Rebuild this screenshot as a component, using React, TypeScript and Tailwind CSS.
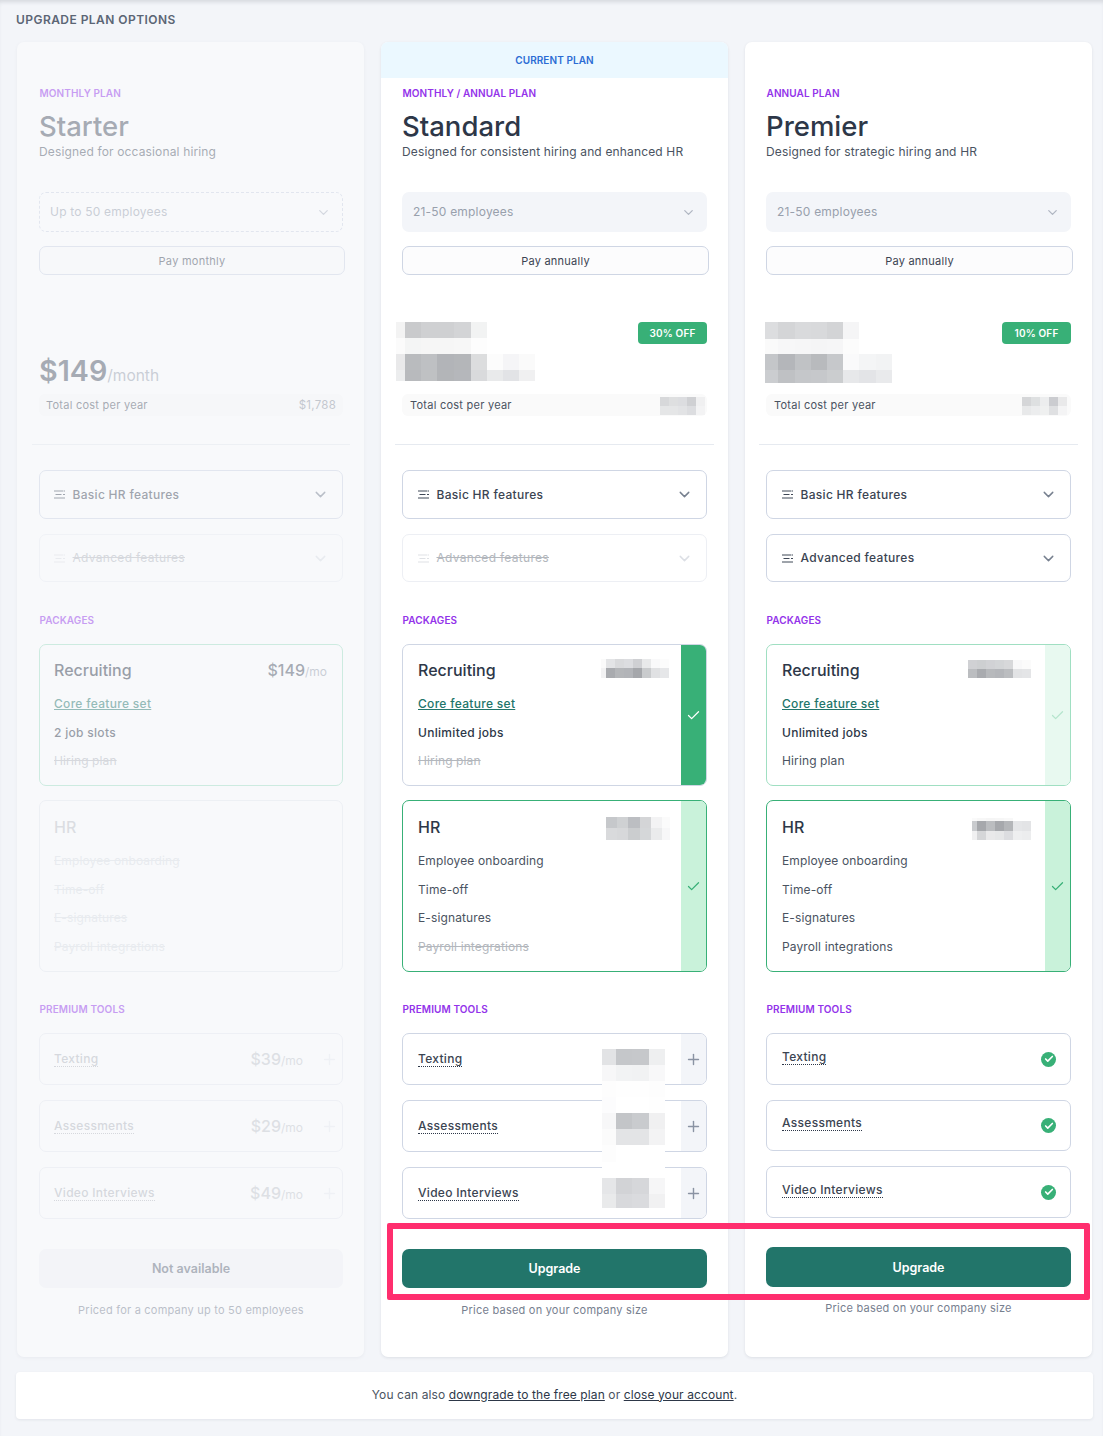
import { Check, ChevronDown, Plus } from "lucide-react";

type MosaicData = { xs: number[]; ys: number[]; rows: string[][] };

type PackageData = {
  title: string;
  box: string;
  strip?: string;
  check?: string;
  titleCls?: string;
  mosaic?: MosaicData;
  pr?: string;
  price?: string;
  items: { text: string; cls: string }[];
};

type ToolData = { name: string; price?: string; mosaic?: boolean };

type Plan = {
  kind: "starter" | "standard" | "premier";
  label: string;
  name: string;
  blurb: string;
  seats: string;
  billing: string;
  priceMosaic?: MosaicData;
  off?: string;
  totalMosaic?: MosaicData;
  advancedOff: boolean;
  packages: PackageData[];
};

const STD_PRICE: MosaicData = {
  xs: [9.3, 16, 16, 16.7, 16.7, 16, 16, 16.6, 16],
  ys: [16.3, 16, 16, 11],
  rows: [
    ["#f3f3f3", "#c9cacc", "#cfd0d2", "#cfd0d2", "#d3d4d6", "#f2f3f3", "#fff", "#fff", "#fff"],
    ["#fbfbfb", "#f4f5f5", "#f6f6f6", "#f6f6f6", "#f7f7f7", "#fdfdfd", "#fff", "#fff", "#fff"],
    ["#e9e9ea", "#b9bbbe", "#bec0c3", "#b2b4b8", "#b4b6b9", "#dcddde", "#fcfcfc", "#f5f5f7", "#fafafa"],
    ["#ecedee", "#b8babd", "#bfc1c3", "#b3b5b8", "#b5b7bb", "#d9dadc", "#e9eaeb", "#e2e3e6", "#f0f0f1"],
  ],
};

const PRE_PRICE: MosaicData = {
  xs: [13.3, 16.7, 16, 16.3, 16, 16, 16.4, 16.3],
  ys: [16.6, 15.7, 16, 13],
  rows: [
    ["#dcdddf", "#d4d5d7", "#d9dadc", "#d8d9db", "#d3d4d6", "#f5f5f6", "#fff", "#fff"],
    ["#fafafa", "#f7f7f8", "#f6f6f7", "#f5f5f6", "#f6f6f7", "#fcfcfc", "#fff", "#fff"],
    ["#c4c6c9", "#b4b6ba", "#c0c2c5", "#b8babd", "#c6c8cb", "#fafafb", "#f4f5f6", "#f2f3f4"],
    ["#cbcdd0", "#bfc1c4", "#c5c7ca", "#c6c8cb", "#cbcdcf", "#e7e8ea", "#e3e4e7", "#e9eaec"],
  ],
};

const STD_TOTAL: MosaicData = {
  xs: [9, 9.3, 8.7, 9, 9],
  ys: [9, 9],
  rows: [
    ["#d7d8da", "#dedfe0", "#dcdde0", "#cfd0d3", "#f0f0f1"],
    ["#e5e6e7", "#e5e6e7", "#e2e3e5", "#dcdde0", "#f3f3f4"],
  ],
};

const PRE_TOTAL: MosaicData = {
  xs: [9, 9, 9, 9.4, 9],
  ys: [9, 9],
  rows: [
    ["#d5d6d8", "#dee0e1", "#ecedee", "#cbccd0", "#e9e9ea"],
    ["#e8e9ea", "#ecedee", "#eff0f0", "#dfe0e2", "#f4f4f5"],
  ],
};

const STD_RECRUIT: MosaicData = {
  xs: [4.7, 9, 9, 9, 9, 9, 9.3, 8.7],
  ys: [9, 9.4],
  rows: [
    ["#fafafa", "#e3e4e6", "#d9dadc", "#dcdde0", "#cfd0d3", "#e8e9ea", "#f9f9fa", "#fcfcfc"],
    ["#f2f2f3", "#a9abaf", "#b4b6b9", "#b2b4b8", "#a5a7ab", "#c9cbcd", "#e0e1e3", "#e6e7e9"],
  ],
};

const STD_HR: MosaicData = {
  xs: [11.3, 11, 11.4, 11.3, 11, 8],
  ys: [11, 11.4],
  rows: [
    ["#c6c8cb", "#cfd1d3", "#bcbec2", "#d4d5d7", "#f3f3f4", "#fbfbfb"],
    ["#d9dadc", "#d7d8da", "#cbcdcf", "#d5d7d9", "#eaebec", "#f7f7f8"],
  ],
};

const PRE_RECRUIT: MosaicData = {
  xs: [9, 9, 9, 9, 9, 9, 9],
  ys: [9, 9],
  rows: [
    ["#d0d1d4", "#cdcfd1", "#d1d2d5", "#d3d5d7", "#d7d8da", "#f8f8f9", "#fbfbfb"],
    ["#bbbdc0", "#a9abaf", "#b7b9bc", "#b4b6ba", "#bbbdc0", "#e2e3e5", "#e4e5e7"],
  ],
};

const PRE_HR: MosaicData = {
  xs: [5, 9, 9, 9, 9, 9, 9],
  ys: [3.7, 9.3, 9],
  rows: [
    ["#fafafa", "#f7f7f7", "#f5f5f5", "#f6f6f6", "#f8f8f8", "#fff", "#fff"],
    ["#c9cbce", "#a6a8ac", "#bbbdc0", "#a6a8ac", "#b4b6b9", "#e5e6e8", "#e3e4e6"],
    ["#f0f0f1", "#d5d6d8", "#e9e9ea", "#e6e7e8", "#dcdde0", "#eeeff0", "#ecedee"],
  ],
};

const TOOL_OVERLAY: MosaicData = {
  xs: [14.3, 16, 16.7, 16],
  ys: [16, 16, 15.7, 16, 16.6, 16, 16.7, 16, 16, 14],
  rows: [
    ["#e2e3e5", "#c5c7ca", "#c6c8cb", "#eeeff0"],
    ["#f7f7f8", "#f2f3f4", "#f1f2f3", "#f8f8f9"],
    ["#fdfdfd", "#fefefe", "#fefefe", "#fdfdfd"],
    ["#fcfcfd", "#fff", "#fff", "#fefefe"],
    ["#f7f7f8", "#c3c5c8", "#c9cbce", "#f0f0f1"],
    ["#fbfbfb", "#e3e4e6", "#e3e4e6", "#f3f3f4"],
    ["#fdfdfd", "#fff", "#fff", "#fff"],
    ["#fff", "#fff", "#fff", "#fff"],
    ["#e5e6e8", "#d2d3d6", "#d6d7da", "#f6f6f7"],
    ["#e9eaeb", "#d8d9dc", "#dadbde", "#f1f1f2"],
  ],
};

const TOOLS: Record<Plan["kind"], ToolData[]> = {
  starter: [
    { name: "Texting", price: "$39" },
    { name: "Assessments", price: "$29" },
    { name: "Video Interviews", price: "$49" },
  ],
  standard: [{ name: "Texting" }, { name: "Assessments" }, { name: "Video Interviews" }],
  premier: [{ name: "Texting" }, { name: "Assessments" }, { name: "Video Interviews" }],
};

const ON = "text-[#4a5361] tracking-[0.12px]";
const OFF = "text-[#b3b7bd] line-through tracking-[0.12px]";
const GONE = "text-[#dcdfe4] line-through tracking-[0.12px]";
const CORE = "text-[#22756a] underline font-medium tracking-[0.3px]";
const STRONG = "text-[#2d3748] font-medium tracking-[0.3px]";

const plans: Plan[] = [
  {
    kind: "starter",
    label: "MONTHLY PLAN",
    name: "Starter",
    blurb: "Designed for occasional hiring",
    seats: "Up to 50 employees",
    billing: "Pay monthly",
    advancedOff: true,
    packages: [
      {
        title: "Recruiting",
        box: "border-[#a0dfc2]",
        price: "$149",
        items: [
          { text: "Core feature set", cls: CORE },
          { text: "2 job slots", cls: STRONG },
          { text: "Hiring plan", cls: OFF },
        ],
      },
      {
        title: "HR",
        box: "border-[#e7eaf0]",
        titleCls: "opacity-30",
        items: [
          { text: "Employee onboarding", cls: GONE },
          { text: "Time-off", cls: GONE },
          { text: "E-signatures", cls: GONE },
          { text: "Payroll integrations", cls: GONE },
        ],
      },
    ],
  },
  {
    kind: "standard",
    label: "MONTHLY / ANNUAL PLAN",
    name: "Standard",
    blurb: "Designed for consistent hiring and enhanced HR",
    seats: "21-50 employees",
    billing: "Pay annually",
    priceMosaic: STD_PRICE,
    off: "30% OFF",
    totalMosaic: STD_TOTAL,
    advancedOff: true,
    packages: [
      {
        title: "Recruiting",
        box: "border-[#cfd6e4]",
        strip: "bg-[#38b077]",
        check: "text-white",
        mosaic: STD_RECRUIT,
        pr: "pr-[12px]",
        items: [
          { text: "Core feature set", cls: CORE },
          { text: "Unlimited jobs", cls: STRONG },
          { text: "Hiring plan", cls: OFF },
        ],
      },
      {
        title: "HR",
        box: "border-[#38b077]",
        strip: "bg-[#c9f2da]",
        check: "text-[#38b077]",
        mosaic: STD_HR,
        pr: "pr-[11px]",
        items: [
          { text: "Employee onboarding", cls: ON },
          { text: "Time-off", cls: ON },
          { text: "E-signatures", cls: ON },
          { text: "Payroll integrations", cls: OFF },
        ],
      },
    ],
  },
  {
    kind: "premier",
    label: "ANNUAL PLAN",
    name: "Premier",
    blurb: "Designed for strategic hiring and HR",
    seats: "21-50 employees",
    billing: "Pay annually",
    priceMosaic: PRE_PRICE,
    off: "10% OFF",
    totalMosaic: PRE_TOTAL,
    advancedOff: false,
    packages: [
      {
        title: "Recruiting",
        box: "border-[#a0dfc2]",
        strip: "bg-[#e8f9f0]",
        check: "text-[#b5e5cd]",
        mosaic: PRE_RECRUIT,
        pr: "pr-[14px]",
        items: [
          { text: "Core feature set", cls: CORE },
          { text: "Unlimited jobs", cls: STRONG },
          { text: "Hiring plan", cls: ON },
        ],
      },
      {
        title: "HR",
        box: "border-[#38b077]",
        strip: "bg-[#c9f2da]",
        check: "text-[#38b077]",
        mosaic: PRE_HR,
        pr: "pr-[14px]",
        items: [
          { text: "Employee onboarding", cls: ON },
          { text: "Time-off", cls: ON },
          { text: "E-signatures", cls: ON },
          { text: "Payroll integrations", cls: ON },
        ],
      },
    ],
  },
];

// blurred-out prices in the screenshot
function Mosaic({ data, className }: { data: MosaicData; className?: string }) {
  return (
    <div
      className={`grid shrink-0 ${className ?? ""}`}
      style={{
        gridTemplateColumns: data.xs.map((x) => `${x}px`).join(" "),
        gridTemplateRows: data.ys.map((y) => `${y}px`).join(" "),
      }}
    >
      {data.rows.flat().map((c, i) => (
        <div key={i} style={{ background: c }} />
      ))}
    </div>
  );
}

function BarsIcon() {
  return (
    <svg width="11" height="9" viewBox="0 0 11 9" fill="none" stroke="currentColor" strokeWidth="1" className="shrink-0">
      <path d="M0 1h9.5M10 1h1M1.5 4.5H7.5M9 4.5h2M0 8h11" />
    </svg>
  );
}

function Section({ children, className }: { children: React.ReactNode; className?: string }) {
  return (
    <div className={`ml-[0.5px] text-[10px] leading-[12px] font-semibold tracking-[0.1px] text-[#9333ea] ${className ?? ""}`}>
      {children}
    </div>
  );
}

function Accordion({ label, off, inset, className }: { label: string; off?: boolean; inset: string; className: string }) {
  return (
    <div
      className={`flex items-center rounded-[7px] border pr-[13px] ${inset} ${off ? "border-[#edeff4]" : "border-[#cfd6e4]"} ${className}`}
    >
      <span className={off ? "text-[#dfe1e5]" : "text-[#3f4856]"}>
        <BarsIcon />
      </span>
      <span className={`ml-[7.5px] flex-1 text-[12px] tracking-[0.3px] ${off ? "text-[#b3b7bd] line-through" : "font-medium text-[#3b4452]"}`}>
        {label}
      </span>
      <ChevronDown size={17} strokeWidth={2} className={off ? "text-[#dcdfe5]" : "text-[#77808f]"} />
    </div>
  );
}

function PackageBox({ p, inset, className }: { p: PackageData; inset: string; className: string }) {
  const hr = p.title === "HR";
  return (
    <div className={`flex overflow-hidden rounded-[7px] border ${p.box} ${className}`}>
      <div className={`flex-1 ${inset} ${hr ? "pt-[14px]" : "pt-[13px]"}`}>
        <div className={`flex h-[24px] items-center justify-between ${p.pr ?? "pr-[15px]"}`}>
          <span className={`text-[16px] font-medium text-[#2d3748] ${p.titleCls ?? ""}`}>{p.title}</span>
          {p.mosaic && <Mosaic data={p.mosaic} className={hr ? "mt-[3px]" : "-mt-[3px]"} />}
          {p.price && (
            <span className="text-[16px] font-medium text-[#4a5361]">
              {p.price}
              <span className="text-[12px] font-normal text-[#98a0ac]">/mo</span>
            </span>
          )}
        </div>
        <div className="mt-[8px]">
          {p.items.map((it) => (
            <div key={it.text} className={`text-[12px] leading-[28.7px] ${it.cls}`}>
              {it.text}
            </div>
          ))}
        </div>
      </div>
      {p.strip && (
        <div className={`flex w-[25px] shrink-0 items-center justify-center ${p.strip}`}>
          <Check size={15} strokeWidth={2} className={p.check} />
        </div>
      )}
    </div>
  );
}

function ToolRow({ tool, kind }: { tool: ToolData; kind: Plan["kind"] }) {
  const off = kind === "starter";
  const size = kind === "premier" ? "h-[51.5px]" : "h-[52.3px]";
  return (
    <div className={`flex overflow-hidden rounded-[7px] border ${size} ${off ? "border-[#e9ebf1]" : "border-[#cfd6e4]"}`}>
      <div className={`flex flex-1 items-center ${off ? "pl-[14px]" : "pl-[15px]"}`}>
        <span
          className={`border-b border-dotted text-[12px] leading-[15px] font-medium tracking-[0.3px] ${kind === "premier" ? "-mt-[4px]" : "-mt-[1px]"} ${off ? "border-[#b3b7bd] text-[#b3b7bd]" : "border-[#2d3748] text-[#3b4452]"}`}
        >
          {tool.name}
        </span>
      </div>
      {kind === "premier" && (
        <div className="flex items-center pr-[14px] pt-[1px]">
          <span className="flex h-[15px] w-[15px] items-center justify-center rounded-full bg-[#38b077]">
            <Check size={10} strokeWidth={4} className="text-white" />
          </span>
        </div>
      )}
      {kind === "standard" && (
        <div className="flex w-[25px] items-center justify-center bg-[#f3f5f9]">
          <Plus size={17} strokeWidth={2} className="text-[#8a93a3]" />
        </div>
      )}
      {off && (
        <div className="flex items-center">
          <span className="text-[16px] font-medium text-[#c4c7cc]">
            {tool.price}
            <span className="text-[12px] font-normal">/mo</span>
          </span>
          <div className="flex w-[39px] items-center justify-center pl-[13px]">
            <Plus size={17} strokeWidth={2} className="text-[#eceef2]" />
          </div>
        </div>
      )}
    </div>
  );
}

function PlanCard({ plan }: { plan: Plan }) {
  const starter = plan.kind === "starter";
  const premier = plan.kind === "premier";
  const inset = starter ? "pl-[14px]" : "pl-[15px]";
  return (
    <div className={`flex h-[1315px] flex-col overflow-hidden rounded-[7px] bg-white shadow-[0_1px_3px_rgba(30,41,59,0.1)] ${starter ? "opacity-[0.45]" : ""}`}>
      {plan.kind === "standard" ? (
        <div className="flex h-[36px] items-center justify-center bg-[#ebf8ff] text-[10px] font-semibold tracking-[0.07px] text-[#2b6cd4]">
          CURRENT PLAN
        </div>
      ) : (
        <div className="h-[36px]" />
      )}

      <div className={`flex flex-1 flex-col pr-[21px] ${starter ? "pl-[22px]" : "pl-[21px]"}`}>
        <Section className="mt-[9px]">{plan.label}</Section>
        <div className={`mt-[10px] text-[27.5px] leading-[34px] font-medium ${starter ? "text-[#4a5361]" : "text-[#2d3748]"}`}>{plan.name}</div>
        <div className="text-[12px] leading-[17px] tracking-[0.15px] text-[#4a5361]">{plan.blurb}</div>

        <div
          className={`mt-[32px] flex h-[40px] items-center justify-between rounded-[7px] pr-[11.5px] text-[12px] tracking-[0.2px] text-[#98a0ac] ${starter ? "border border-dashed border-[#cfd6e4] pl-[10px]" : "bg-[#f3f5f9] pl-[11px]"}`}
        >
          {plan.seats}
          <ChevronDown size={15} strokeWidth={2} className="text-[#b0b6c2]" />
        </div>
        <div className="-mr-[2px] mt-[14px] flex h-[29px] items-center justify-center rounded-[7px] border border-[#cfd6e4] bg-[#fcfcfd] pt-px text-[11px] tracking-[0.25px] text-[#3b4452]">
          {plan.billing}
        </div>

        <div className={`relative mt-[47px] flex h-[60px] justify-between ${starter ? "items-end" : ""}`}>
          {starter ? (
            <div className="-mb-[12px] text-[28.7px] leading-[36px] font-semibold text-[#4a5361]">
              $149
              <span className="text-[15.5px] font-normal text-[#98a0ac]">/month</span>
            </div>
          ) : (
            <>
              {plan.priceMosaic && (
                <Mosaic data={plan.priceMosaic} className={premier ? "-ml-[1px]" : "-ml-[6px]"} />
              )}
              <span className="flex h-[22px] w-[69px] items-center justify-center rounded-[4px] bg-[#38b077] text-[10px] font-semibold tracking-[0.15px] text-white">
                {plan.off}
              </span>
            </>
          )}
        </div>

        <div
          className={`mt-[12px] flex h-[22px] items-center justify-between rounded-[6px] bg-[#fafafa] pt-px text-[11px] tracking-[0.25px] text-[#4a5361] ${starter ? "pl-[7px]" : "pl-[8px]"} ${premier ? "pr-[4px]" : "pr-[2px]"}`}
        >
          Total cost per year
          {plan.totalMosaic ? <Mosaic data={plan.totalMosaic} /> : <span className="pr-[5px] text-[11.5px] text-[#8a919c]">$1,788</span>}
        </div>

        <div className="-mx-[7px] mt-[28px] h-px shrink-0 bg-[#e6eaf0]" />

        <Accordion label="Basic HR features" inset={inset} className="mt-[25px] h-[49px]" />
        <Accordion label="Advanced features" inset={inset} off={plan.advancedOff} className="mt-[15px] h-[48px]" />

        <Section className="mt-[32px]">PACKAGES</Section>
        <PackageBox p={plan.packages[0]} inset={inset} className="mt-[18px] h-[142px]" />
        <PackageBox p={plan.packages[1]} inset={inset} className="mt-[14px] h-[172px]" />

        <Section className="mt-[31px]">PREMIUM TOOLS</Section>
        <div className={`relative mt-[18px] flex flex-col ${premier ? "gap-[15px]" : "gap-[14.7px]"}`}>
          {TOOLS[plan.kind].map((t) => (
            <ToolRow key={t.name} tool={t} kind={plan.kind} />
          ))}
          {plan.kind === "standard" && (
            <Mosaic data={TOOL_OVERLAY} className="absolute left-[200px] top-[16px]" />
          )}
        </div>

        <div
          className={`flex items-center justify-center rounded-[7px] text-[12.5px] font-semibold ${premier ? "mt-[29px] h-[40px] pt-[3px]" : "mt-[30px] h-[39px] pt-px"} ${starter ? "bg-[#f3f4f7] text-[#5b6575]" : "bg-[#22756a] text-white"}`}
        >
          {starter ? "Not available" : "Upgrade"}
        </div>
        <div className={`text-center text-[11px] leading-[16px] tracking-[0.22px] text-[#77808f] ${premier ? "mt-[13px]" : "mt-[14px]"}`}>
          {starter ? "Priced for a company up to 50 employees" : "Price based on your company size"}
        </div>
      </div>
    </div>
  );
}

export default function App() {
  return (
    <div className="relative min-h-[1436px] bg-[#f3f5f9] pl-4 pr-[10px] font-['Inter',sans-serif] shadow-[inset_0_4px_4px_-2px_rgba(30,41,59,0.14)]">
      <div className="pt-[12px] text-[12px] leading-[15px] font-semibold tracking-[0.45px] text-[#5b6575]">
        UPGRADE PLAN OPTIONS
      </div>

      <div className="mx-px mt-[15px] grid grid-cols-3 gap-[17px]">
        {plans.map((p) => (
          <PlanCard key={p.kind} plan={p} />
        ))}
      </div>

      <div className="mt-[15px] flex h-[47px] items-center justify-center rounded-[4px] bg-white pb-[2px] text-[12px] tracking-[0.1px] text-[#4a5361] shadow-[0_1px_3px_rgba(30,41,59,0.08)]">
        <span>
          You can also <span className="text-[#2d3748] underline">downgrade to the free plan</span> or{" "}
          <span className="text-[#2d3748] underline">close your account</span>.
        </span>
      </div>

      {/* annotation drawn over the screenshot */}
      <div className="pointer-events-none absolute left-[387px] top-[1223px] h-[77px] w-[703px] rounded-[2px] border-[6.5px] border-[#ff2e6e]" />
    </div>
  );
}
